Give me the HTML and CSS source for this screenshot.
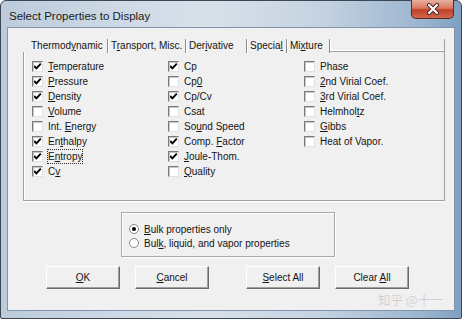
FILE: index.html
```html
<!DOCTYPE html>
<html lang="en">
<head>
  <meta charset="UTF-8" />
  <title>Select Properties to Display</title>
  <link rel="stylesheet" href="styles.css">
</head>
<body>
  <div class="window">
    <div class="titlebar">
      <span class="title">Select Properties to Display</span>
      <span class="close">
        <svg width="14" height="12" viewBox="0 0 14 12">
          <path d="M3 2 L11 10 M11 2 L3 10" stroke="#4a2420" stroke-width="4" stroke-linecap="round" fill="none"/>
          <path d="M3 2 L11 10 M11 2 L3 10" stroke="#ffffff" stroke-width="2.2" stroke-linecap="round" fill="none"/>
        </svg>
      </span>
    </div>

    <div class="client">
      <div class="tabstrip">
        <span class="tab tab-1">Thermod<u>y</u>namic</span>
        <span class="tab tab-2">T<u>r</u>ansport, Misc.</span>
        <span class="tab tab-3">Der<u>i</u>vative</span>
        <span class="tab tab-4">Specia<u>l</u></span>
        <span class="tab tab-5">Mi<u>x</u>ture</span>
        <span class="tab-fill"></span>
      </div>

      <div class="panel">
        <div class="col">
          <div class="row"><span class="box on"></span><span class="label"><u>T</u>emperature</span></div>
          <div class="row"><span class="box on"></span><span class="label"><u>P</u>ressure</span></div>
          <div class="row"><span class="box on"></span><span class="label"><u>D</u>ensity</span></div>
          <div class="row"><span class="box"></span><span class="label"><u>V</u>olume</span></div>
          <div class="row"><span class="box"></span><span class="label">Int. <u>E</u>nergy</span></div>
          <div class="row"><span class="box on"></span><span class="label">En<u>t</u>halpy</span></div>
          <div class="row"><span class="box on"></span><span class="label focus">E<u>n</u>tropy</span></div>
          <div class="row"><span class="box on"></span><span class="label">C<u>v</u></span></div>
        </div>
        <div class="col">
          <div class="row"><span class="box on"></span><span class="label">Cp</span></div>
          <div class="row"><span class="box"></span><span class="label">Cp<u>0</u></span></div>
          <div class="row"><span class="box on"></span><span class="label">Cp/Cv</span></div>
          <div class="row"><span class="box"></span><span class="label">Csat</span></div>
          <div class="row"><span class="box"></span><span class="label">So<u>u</u>nd Speed</span></div>
          <div class="row"><span class="box on"></span><span class="label">Comp. <u>F</u>actor</span></div>
          <div class="row"><span class="box on"></span><span class="label"><u>J</u>oule-Thom.</span></div>
          <div class="row"><span class="box"></span><span class="label"><u>Q</u>uality</span></div>
        </div>
        <div class="col">
          <div class="row"><span class="box"></span><span class="label">Phase</span></div>
          <div class="row"><span class="box"></span><span class="label"><u>2</u>nd Virial Coef.</span></div>
          <div class="row"><span class="box"></span><span class="label"><u>3</u>rd Virial Coef.</span></div>
          <div class="row"><span class="box"></span><span class="label">Helmhol<u>t</u>z</span></div>
          <div class="row"><span class="box"></span><span class="label"><u>G</u>ibbs</span></div>
          <div class="row"><span class="box"></span><span class="label">Heat of Vapor.</span></div>
        </div>
      </div>

      <div class="group">
        <div class="row"><span class="radio on"></span><span class="label"><u>B</u>ulk properties only</span></div>
        <div class="row"><span class="radio"></span><span class="label">Bul<u>k</u>, liquid, and vapor properties</span></div>
      </div>

      <div class="buttons">
        <button class="btn"><u>O</u>K</button>
        <button class="btn"><u>C</u>ancel</button>
        <button class="btn wide-gap"><u>S</u>elect All</button>
        <button class="btn">Clear <u>A</u>ll</button>
      </div>
    </div>

    <div class="watermark">知乎 @十一</div>
  </div>
</body>
</html>
```

FILE: styles.css
```css
* {
  box-sizing: border-box;
}

body {
  margin: 0;
  font-family: 'Liberation Sans', Arial, sans-serif;
  font-size: 10px;
  color: #141414;
  background: #ffffff;
}

.window {
  position: relative;
  width: 462px;
  height: 319px;
  display: flex;
  flex-direction: column;
  padding: 0 7px 8px;
  border: 1px solid #3c4654;
  border-radius: 6px 6px 2px 2px;
  background: linear-gradient(to right, #bccbdb 0%, #cdd9e5 25%, #d8e1ea 45%, #c4d2e0 70%, #9ab4cf 92%, #7f9fc2 100%);
}

.titlebar {
  height: 27px;
  display: flex;
  align-items: flex-start;
}

.title {
  padding: 8px 0 0 1px;
  font-size: 11.5px;
  line-height: 14px;
  color: #1b1b1b;
}

.close {
  margin-left: auto;
  margin-top: -1px;
  width: 43px;
  height: 19px;
  display: flex;
  align-items: center;
  justify-content: center;
  border: 1px solid #5c2a22;
  border-top: none;
  border-radius: 0 0 5px 5px;
  background: linear-gradient(to bottom, #e9b0a0 0%, #d9775f 45%, #c4402a 55%, #d0684c 100%);
}

.client {
  flex: 1;
  padding: 11px 9px 0 15px;
  background: #f0f0f0;
  box-shadow: 0 0 0 1px #8095ad;
}

.tabstrip {
  display: flex;
  height: 13px;
  line-height: 14px;
}

.tab {
  padding-left: 3px;
  border-right: 1px solid #8a8a8a;
  box-shadow: 1px 0 0 #ffffff;
  height: 14px;
  white-space: nowrap;
}

.tab-1 {
  width: 85px;
  padding-left: 8px;
}

.tab-2 {
  width: 78px;
}

.tab-3 {
  width: 61px;
}

.tab-4 {
  width: 40px;
}

.tab-5 {
  width: 43px;
}

.tab-fill {
  flex: 1;
  border-bottom: 1px solid #a0a0a0;
  border-right: 1px solid #a0a0a0;
  box-shadow: inset 0 -1px 0 #ffffff;
}

.panel {
  display: flex;
  height: 149px;
  padding: 7px 0 0 8px;
  border: 1px solid #a0a0a0;
  border-top: none;
  box-shadow: inset 1px 0 0 #ffffff, 0 1px 0 #ffffff;
}

.col {
  width: 136px;
}

.row {
  display: flex;
  align-items: center;
  height: 15px;
  gap: 5px;
}

.box {
  width: 11px;
  height: 11px;
  flex: none;
  background: #ffffff;
  border: 1px solid;
  border-color: #7a7a7a #e2e2e2 #e2e2e2 #7a7a7a;
  box-shadow: inset 1px 1px 0 #c8c8c8;
}

.box.on {
  background: #ffffff url("data:image/svg+xml;utf8,<svg xmlns='http://www.w3.org/2000/svg' width='9' height='9' viewBox='0 0 9 9'><polyline points='1.2,4 3.4,6.4 7.8,1.6' fill='none' stroke='black' stroke-width='1.9'/></svg>") center / 9px 9px no-repeat;
}

.label {
  white-space: nowrap;
  line-height: 13px;
}

.focus {
  outline: 1px dotted #303030;
  outline-offset: 0;
}

.group {
  width: 214px;
  height: 45px;
  margin: 11px 0 0 98px;
  padding: 9px 0 0 7px;
  border: 1px solid #a8a8a8;
  box-shadow: inset 1px 1px 0 #ffffff, 1px 1px 0 #ffffff;
}

.group .row {
  height: 14px;
}

.radio {
  width: 10px;
  height: 10px;
  flex: none;
  border-radius: 50%;
  border: 1px solid #8a8a8a;
  background: #ffffff;
  display: flex;
  align-items: center;
  justify-content: center;
}

.radio.on::after {
  content: "";
  width: 4px;
  height: 4px;
  border-radius: 50%;
  background: #000;
}

.buttons {
  display: flex;
  gap: 15px;
  margin: 9px 0 0 23px;
}

.btn {
  width: 74px;
  height: 23px;
  padding: 0;
  font-family: 'Liberation Sans', Arial, sans-serif;
  font-size: 10px;
  color: #141414;
  background: #f0f0f0;
  border: 1px solid;
  border-color: #ffffff #6a6a6a #6a6a6a #ffffff;
  box-shadow: inset -1px -1px 0 #a0a0a0;
}

.wide-gap {
  margin-left: 22px;
}

.watermark {
  position: absolute;
  left: 377px;
  top: 289px;
  font-family: 'Noto Sans CJK SC', sans-serif;
  font-size: 12.5px;
  color: #cfcfcf;
  text-shadow: 0 0 1px #ffffff;
  white-space: nowrap;
}
```
